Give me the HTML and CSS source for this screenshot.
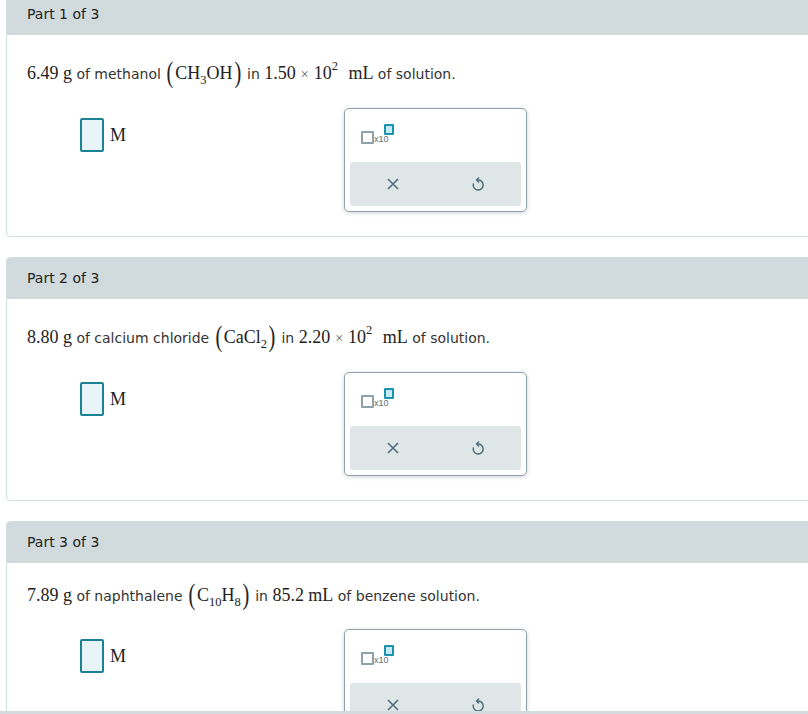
FILE: index.html
```html
<!DOCTYPE html>
<html>
<head>
<meta charset="utf-8">
<link rel="stylesheet" href="styles.css">
</head>
<body>
<div class="page">

  <section class="card">
    <div class="card-head">Part 1 of 3</div>
    <div class="card-body">
      <p class="question"><span class="m">6.49</span> <span class="m">g</span> of methanol <span class="m"><span class="paren">(</span>CH<sub>3</sub>OH<span class="paren">)</span></span> in <span class="m">1.50<span class="times">×</span>10<sup>2</sup></span> <span class="m unit">mL</span> of solution.</p>
      <div class="answer-row">
        <div class="answer">
          <span class="input"></span><span class="unit-label">M</span>
        </div>
        <div class="toolbox">
          <div class="tool-top">
            <span class="sci"><span class="sci-box"></span><span class="sci-x">x10</span><span class="sci-sup"></span></span>
          </div>
          <div class="tool-actions">
            <span class="act"><svg width="14" height="14" viewBox="0 0 14 14"><path d="M2 2 L12 12 M12 2 L2 12" stroke="#4e6e7a" stroke-width="1.6" fill="none"/></svg></span>
            <span class="act"><svg width="16" height="18" viewBox="0 0 16 18"><path d="M3.3 9 A5 5 0 1 0 8.5 5 H6.8" stroke="#4e6e7a" stroke-width="1.5" fill="none" stroke-linecap="round"/><path d="M8.6 3 L6.6 5 L8.6 7" stroke="#4e6e7a" stroke-width="1.5" fill="none" stroke-linecap="round" stroke-linejoin="round"/></svg></span>
          </div>
        </div>
      </div>
    </div>
  </section>

  <section class="card">
    <div class="card-head">Part 2 of 3</div>
    <div class="card-body">
      <p class="question"><span class="m">8.80</span> <span class="m">g</span> of calcium chloride <span class="m"><span class="paren">(</span>CaCl<sub>2</sub><span class="paren">)</span></span> in <span class="m">2.20<span class="times">×</span>10<sup>2</sup></span> <span class="m unit">mL</span> of solution.</p>
      <div class="answer-row">
        <div class="answer">
          <span class="input"></span><span class="unit-label">M</span>
        </div>
        <div class="toolbox">
          <div class="tool-top">
            <span class="sci"><span class="sci-box"></span><span class="sci-x">x10</span><span class="sci-sup"></span></span>
          </div>
          <div class="tool-actions">
            <span class="act"><svg width="14" height="14" viewBox="0 0 14 14"><path d="M2 2 L12 12 M12 2 L2 12" stroke="#4e6e7a" stroke-width="1.6" fill="none"/></svg></span>
            <span class="act"><svg width="16" height="18" viewBox="0 0 16 18"><path d="M3.3 9 A5 5 0 1 0 8.5 5 H6.8" stroke="#4e6e7a" stroke-width="1.5" fill="none" stroke-linecap="round"/><path d="M8.6 3 L6.6 5 L8.6 7" stroke="#4e6e7a" stroke-width="1.5" fill="none" stroke-linecap="round" stroke-linejoin="round"/></svg></span>
          </div>
        </div>
      </div>
    </div>
  </section>

  <section class="card">
    <div class="card-head">Part 3 of 3</div>
    <div class="card-body">
      <p class="question short"><span class="m">7.89</span> <span class="m">g</span> of naphthalene <span class="m"><span class="paren">(</span>C<sub>10</sub>H<sub>8</sub><span class="paren">)</span></span> in <span class="m">85.2</span> <span class="m">mL</span> of benzene solution.</p>
      <div class="answer-row">
        <div class="answer">
          <span class="input"></span><span class="unit-label">M</span>
        </div>
        <div class="toolbox">
          <div class="tool-top">
            <span class="sci"><span class="sci-box"></span><span class="sci-x">x10</span><span class="sci-sup"></span></span>
          </div>
          <div class="tool-actions">
            <span class="act"><svg width="14" height="14" viewBox="0 0 14 14"><path d="M2 2 L12 12 M12 2 L2 12" stroke="#4e6e7a" stroke-width="1.6" fill="none"/></svg></span>
            <span class="act"><svg width="16" height="18" viewBox="0 0 16 18"><path d="M3.3 9 A5 5 0 1 0 8.5 5 H6.8" stroke="#4e6e7a" stroke-width="1.5" fill="none" stroke-linecap="round"/><path d="M8.6 3 L6.6 5 L8.6 7" stroke="#4e6e7a" stroke-width="1.5" fill="none" stroke-linecap="round" stroke-linejoin="round"/></svg></span>
          </div>
        </div>
      </div>
    </div>
  </section>

</div>
<div class="footer-line"></div>
</body>
</html>
```

FILE: styles.css
```css
html, body {
  margin: 0;
  padding: 0;
  background: #ffffff;
  overflow: hidden;
}

body {
  font-family: "DejaVu Sans", Verdana, sans-serif;
  font-size: 14px;
  color: #333333;
}

.page {
  margin-top: -7px;
  padding-left: 6px;
  display: flex;
  flex-direction: column;
  gap: 20px;
}

.card {
  width: 830px;
  border: 1px solid #d3dcdf;
  border-radius: 4px;
  background: #ffffff;
  overflow: hidden;
}

.card-head {
  height: 41px;
  line-height: 41px;
  background: #d1dadd;
  padding-left: 20px;
  font-size: 14px;
  color: #222;
}

.card-body {
  padding: 26px 20px 24px 20px;
}

.question {
  margin: 0;
  height: 24px;
  line-height: 24px;
  white-space: nowrap;
  color: #333;
}

.question.short {
  margin-top: -5px;
  height: 22px;
  line-height: 22px;
}

.m {
  font-family: "Liberation Serif", "Times New Roman", serif;
  font-size: 18px;
  color: #222;
}

.m sub {
  font-size: 12.5px;
  vertical-align: -5px;
  line-height: 0;
}

.m sup {
  font-size: 12.5px;
  vertical-align: 9px;
  line-height: 0;
  margin-right: 6px;
}

.paren {
  font-size: 24px;
  display: inline-block;
  transform: scaleX(0.85) scaleY(1.25) translateY(1px);
  line-height: 0;
  margin: 0 1px;
}

.times {
  font-size: 14px;
  color: #555;
  padding: 0 5px;
}

.answer-row {
  display: flex;
  align-items: flex-start;
  margin-top: 23px;
}

.answer {
  width: 264px;
  margin-left: 53px;
  margin-top: 10px;
  display: flex;
  align-items: center;
}

.input {
  display: block;
  width: 20px;
  height: 30px;
  border: 2px solid #1a8294;
  border-radius: 2px;
  background: #e7f5f9;
}

.unit-label {
  font-family: "Liberation Serif", "Times New Roman", serif;
  font-size: 18px;
  color: #222;
  margin-left: 6px;
}

.toolbox {
  box-sizing: border-box;
  width: 183px;
  height: 104px;
  border: 1px solid #8ea2a9;
  border-radius: 5px;
  box-shadow: 0 1px 4px rgba(0, 0, 0, 0.18);
  padding: 5px;
  display: flex;
  flex-direction: column;
  background: #fff;
}

.tool-top {
  flex: 1;
  position: relative;
}

.sci {
  position: absolute;
  left: 11px;
  top: 10px;
  display: block;
  width: 40px;
  height: 24px;
}

.sci-box {
  position: absolute;
  left: 0;
  top: 7px;
  width: 9px;
  height: 9px;
  border: 2px solid #8ea2a9;
  border-radius: 1px;
}

.sci-x {
  position: absolute;
  left: 13px;
  top: 10px;
  font-family: "Liberation Sans", Arial, sans-serif;
  font-size: 9px;
  color: #5a6f77;
  line-height: 10px;
}

.sci-sup {
  position: absolute;
  left: 23px;
  top: 0;
  width: 6px;
  height: 7px;
  border: 2px solid #1894ae;
  background: #c5e9f2;
  border-radius: 1px;
}

.tool-actions {
  height: 44px;
  background: #dfe6e8;
  border-radius: 3px;
  display: grid;
  grid-template-columns: 1fr 1fr;
  align-items: center;
  justify-items: center;
}

.act {
  display: flex;
  align-items: center;
  justify-content: center;
}

.footer-line {
  position: fixed;
  left: 0;
  right: 0;
  bottom: 0;
  height: 3px;
  background: #d3dbde;
}
```
